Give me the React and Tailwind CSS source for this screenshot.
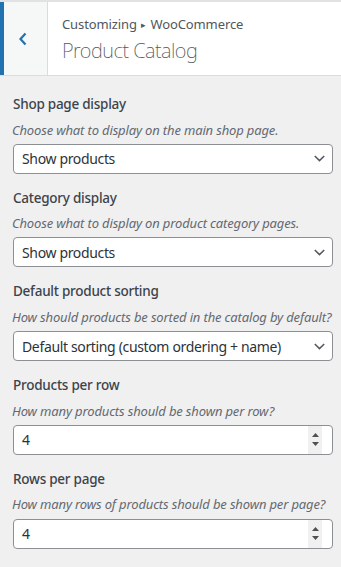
const sections = [
  {
    title: "Shop page display",
    desc: "Choose what to display on the main shop page.",
    type: "select",
    value: "Show products",
  },
  {
    title: "Category display",
    desc: "Choose what to display on product category pages.",
    type: "select",
    value: "Show products",
  },
  {
    title: "Default product sorting",
    desc: "How should products be sorted in the catalog by default?",
    type: "select",
    value: "Default sorting (custom ordering + name)",
  },
  {
    title: "Products per row",
    desc: "How many products should be shown per row?",
    type: "number",
    value: "4",
  },
  {
    title: "Rows per page",
    desc: "How many rows of products should be shown per page?",
    type: "number",
    value: "4",
  },
];

const Chevron = () => (
  <svg width="11" height="7" viewBox="0 0 11 7" className="shrink-0">
    <polyline points="0.8,1 5.5,5.6 10.2,1" fill="none" stroke="#50575e" strokeWidth="1.5" />
  </svg>
);

const Spinner = () => (
  <div className="self-stretch w-[14px] bg-[#f0f0f0] flex flex-col items-center justify-center gap-[5px]">
    <svg width="7" height="4" viewBox="0 0 7 4">
      <polygon points="0,4 3.5,0 7,4" fill="#505050" />
    </svg>
    <svg width="7" height="4" viewBox="0 0 7 4">
      <polygon points="0,0 7,0 3.5,4" fill="#505050" />
    </svg>
  </div>
);

const Control = ({ item }) => {
  return (
    <div className="mb-[12px]">
      <span className="block text-[13.5px] leading-[24.5px] font-[550] tracking-[-0.25px] text-[#3c434a] mb-[4px]">
        {item.title}
      </span>
      <span className="block whitespace-nowrap text-[13px] leading-[18.2px] italic tracking-[-0.15px] text-[#646970] -ml-px">
        {item.desc}
      </span>
      {item.type === "select" ? (
        <div className="mt-[5px] h-[30px] w-[320px] bg-white border border-[#8c8f94] rounded-[4px] flex items-center pl-[8px] pr-[7px] text-[14px] tracking-[-0.35px] text-[#2c3338]">
          <span className="flex-1">{item.value}</span>
          <Chevron />
        </div>
      ) : (
        <div className="mt-[5px] h-[30px] w-[320px] bg-white border border-[#8c8f94] rounded-[4px] flex items-center pl-[8px] pr-[10px] text-[14px] text-[#2c3338]">
          <span className="flex-1">{item.value}</span>
          <Spinner />
        </div>
      )}
    </div>
  );
};

const App = () => {
  return (
    <div className="w-[341px] h-[567px] overflow-hidden bg-[#f0f0f1] font-['Noto_Sans',sans-serif]">
      <div className="h-[2px] bg-[#e2e2e4]" />
      <header className="flex h-[74px] bg-white border-b border-[#dcdcde]">
        <button className="w-[48px] h-full border-l-4 border-l-[#2271b1] border-r border-r-[#dcdcde] bg-[#f6f7f7] flex items-center justify-center pr-[6px]">
          <svg width="10" height="14" viewBox="0 0 10 14">
            <polyline points="7.5,1.5 2.5,7 7.5,12.5" fill="none" stroke="#2271b1" strokeWidth="2.2" />
          </svg>
        </button>
        <div className="pl-[14px] pt-[13px]">
          <div className="text-[13px] leading-[18px] tracking-[-0.1px] text-[#50575e]">
            Customizing <span className="text-[9px] align-[1px] mx-[1px]">▸</span> WooCommerce
          </div>
          <h1 className="mt-[3px] text-[20px] leading-[28px] font-extralight tracking-[-0.5px] text-[#50575e]">
            Product Catalog
          </h1>
        </div>
      </header>
      <div className="pl-[13px] pr-[8px] pt-[16px]">
        {sections.map((item) => (
          <Control key={item.title} item={item} />
        ))}
      </div>
    </div>
  );
};

export default App;
